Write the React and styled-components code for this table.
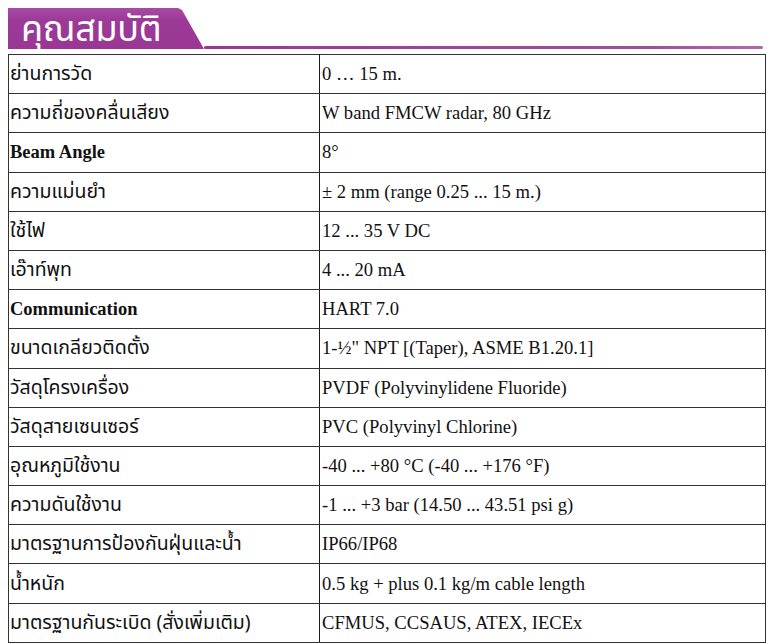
import React from "react";
import styled, { createGlobalStyle } from "styled-components";

const GlobalStyle = createGlobalStyle`
  html, body {
    margin: 0;
    padding: 0;
    background: #ffffff;
  }
`;

const specs = [
  { label: "ย่านการวัด", value: "0 … 15 m." },
  { label: "ความถี่ของคลื่นเสียง", value: "W band FMCW radar, 80 GHz" },
  { label: "Beam Angle", value: "8°", en: true },
  { label: "ความแม่นยำ", value: "± 2 mm (range 0.25 ... 15 m.)" },
  { label: "ใช้ไฟ", value: "12 ... 35 V DC" },
  { label: "เอ๊าท์พุท", value: "4 ... 20 mA" },
  { label: "Communication", value: "HART 7.0", en: true },
  { label: "ขนาดเกลียวติดตั้ง", value: "1-½\" NPT [(Taper), ASME B1.20.1]" },
  { label: "วัสดุโครงเครื่อง", value: "PVDF (Polyvinylidene Fluoride)" },
  { label: "วัสดุสายเซนเซอร์", value: "PVC (Polyvinyl Chlorine)" },
  { label: "อุณหภูมิใช้งาน", value: "-40 ... +80 °C (-40 ... +176 °F)" },
  { label: "ความดันใช้งาน", value: "-1 ... +3 bar (14.50 ... 43.51 psi g)" },
  { label: "มาตรฐานการป้องกันฝุ่นและน้ำ", value: "IP66/IP68" },
  { label: "น้ำหนัก", value: "0.5 kg + plus 0.1 kg/m cable length" },
  { label: "มาตรฐานกันระเบิด (สั่งเพิ่มเติม)", value: "CFMUS, CCSAUS, ATEX, IECEx" },
];

const Page = styled.div`
  width: 773px;
  height: 644px;
  padding: 8px 7px 0 8px;
  box-sizing: border-box;
  overflow: hidden;
`;

const Header = styled.div`
  display: flex;
  align-items: flex-end;
  height: 41px;
`;

const Tab = styled.div`
  width: 196px;
  height: 41px;
  background: linear-gradient(#a84aa3, #9c3a97 30%, #9a3795);
  clip-path: polygon(0 0, 170px 0, 174px 2px, 196px 41px, 0 41px);
  display: flex;
  align-items: center;
  padding-left: 13px;
  box-sizing: border-box;
`;

const TabTitle = styled.span`
  color: #ffffff;
  font-family: "Noto Sans Thai", "Noto Sans Thai Looped", "Loma", "Garuda", "Noto Sans", sans-serif;
  font-size: 36px;
  line-height: 1;
  margin-top: 2px;
  letter-spacing: -0.3px;
`;

const Rule = styled.div`
  flex: 1;
  height: 3px;
  margin-right: 3px;
  background: linear-gradient(90deg, #9a3795, #a24d9d 80%, #b06aac);
  border-radius: 2px;
`;

const Table = styled.table`
  margin-top: 5px;
  width: 758px;
  border-collapse: collapse;
  border: 1.5px solid #1a1a1a;
`;

const Row = styled.tr`
  height: 39.2px;
`;

const LabelCell = styled.td`
  width: 309px;
  padding: 0 0 0 1px;
  border: 1px solid #333;
  border-right: 1.5px solid #1a1a1a;
  font-family: ${p => (p.$en ? '"Liberation Serif", serif' : '"Noto Sans Thai", "Loma", "Garuda", "Liberation Serif", serif')};
  font-weight: ${p => (p.$en ? 700 : 400)};
  font-size: ${p => (p.$en ? "18.5px" : "19.5px")};
  color: #111;
  white-space: nowrap;
`;

const ValueCell = styled.td`
  padding: 0 0 0 2px;
  border: 1px solid #333;
  font-family: "Liberation Serif", "Times New Roman", serif;
  font-size: 18.6px;
  color: #111;
  white-space: nowrap;
`;

export default function App() {
  return (
    <Page>
      <GlobalStyle />
      <Header>
        <Tab>
          <TabTitle>คุณสมบัติ</TabTitle>
        </Tab>
        <Rule />
      </Header>
      <Table>
        <tbody>
          {specs.map(s => (
            <Row key={s.label}>
              <LabelCell $en={s.en}>{s.label}</LabelCell>
              <ValueCell>{s.value}</ValueCell>
            </Row>
          ))}
        </tbody>
      </Table>
    </Page>
  );
}
